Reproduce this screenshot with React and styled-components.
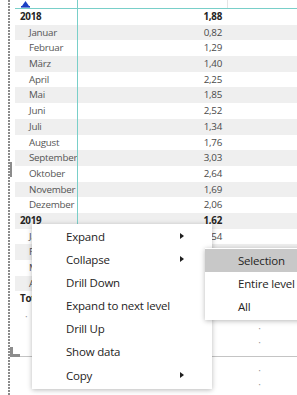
import React from "react";
import styled, { createGlobalStyle } from "styled-components";

const GlobalStyle = createGlobalStyle`
  html, body {
    margin: 0;
    padding: 0;
    background: #ffffff;
    overflow: hidden;
  }
  body {
    font-family: "Open Sans", "Noto Sans", sans-serif;
  }
`;

const TEAL = "#79cfc9";
const ROW_H = 15.7;

const Page = styled.div`
  position: relative;
  display: flex;
  width: 297px;
  height: 395px;
  overflow: hidden;
`;

const FocusRail = styled.div`
  width: 2px;
  margin-left: 8px;
  margin-right: 2px;
  background: repeating-linear-gradient(
    to bottom,
    #8a8a8a 0 2px,
    transparent 2px 3px
  );
`;

// resize handles of the focused visual
const EdgeHandle = styled.div`
  position: absolute;
  left: 10px;
  top: 162px;
  width: 2px;
  height: 15px;
  background: #8c8c8c;
`;

const CornerHandle = styled.div`
  position: absolute;
  left: 10px;
  top: 347px;
  width: 10px;
  height: 10px;
  &::before,
  &::after {
    content: "";
    position: absolute;
    background: #8c8c8c;
  }
  &::before {
    left: 0;
    top: 0;
    width: 3px;
    height: 10px;
  }
  &::after {
    left: 0;
    bottom: 0;
    width: 10px;
    height: 3px;
  }
`;

const Visual = styled.div`
  flex: 1;
  display: flex;
  flex-direction: column;
`;

const TableArea = styled.div`
  height: 356px;
  border-bottom: 1px solid #c4c4c4;
  padding-left: 3px;
  display: flex;
  flex-direction: column;
`;

const Grid = styled.div`
  display: grid;
  grid-template-columns: 63px 150px 1fr;
`;

const HeaderRow = styled(Grid)`
  height: 8px;
  border-bottom: 1px solid ${TEAL};
`;

const HeadCell = styled.div`
  position: relative;
  overflow: hidden;
  border-right: 1px solid ${(p) => (p.$teal ? TEAL : "#e4e4e4")};
  ${(p) => p.$last && "border-right: none;"}
`;

const DrillIcon = styled.svg`
  position: absolute;
  left: 6px;
  bottom: 0;
`;

const Row = styled(Grid)`
  height: ${ROW_H}px;
  background: ${(p) => (p.$shade ? "#efefef" : "#ffffff")};
  font-size: 9.8px;
  letter-spacing: -0.25px;
  line-height: ${ROW_H}px;
`;

const LabelCell = styled.div`
  border-right: 1px solid ${TEAL};
  padding-left: ${(p) => (p.$level === 0 ? 5 : 14)}px;
  color: ${(p) => (p.$level === 0 ? "#252423" : "#555555")};
  font-weight: ${(p) => (p.$level === 0 ? 700 : 400)};
  white-space: nowrap;
  overflow: hidden;
`;

const ValueCell = styled.div`
  text-align: right;
  padding-right: 6px;
  color: ${(p) => (p.$bold ? "#252423" : "#4a4a4a")};
  font-weight: ${(p) => (p.$bold ? 700 : 400)};
`;

const TailRow = styled(Grid)`
  flex: 1;
  font-size: 10px;
  color: #9a9a9a;
`;

const TailLeft = styled.div`
  padding-left: 10px;
  padding-top: 2px;
  line-height: 14px;
`;

const DotStack = styled.div`
  display: flex;
  flex-direction: column;
  align-items: center;
  padding-top: ${(p) => p.$top}px;
  padding-right: 6px;
  line-height: 14px;
  font-size: 10px;
  color: #9a9a9a;
`;

const BelowArea = styled(Grid)`
  padding-left: 3px;
  flex: 1;
`;

const Menu = styled.div`
  position: absolute;
  left: ${(p) => p.$left}px;
  top: ${(p) => p.$top}px;
  width: ${(p) => p.$width}px;
  padding: 1px 0 2px;
  background: #ffffff;
  box-shadow: 0 1px 5px rgba(0, 0, 0, 0.28);
  font-size: 11.5px;
  letter-spacing: -0.2px;
  color: #252423;
`;

const MenuItem = styled.div`
  position: relative;
  height: 23.1px;
  line-height: 23px;
  padding-left: ${(p) => p.$pad}px;
  white-space: nowrap;
  background: ${(p) => (p.$active ? "#c8c8c8" : "transparent")};
`;

const SubArrow = styled.span`
  position: absolute;
  left: 148px;
  top: 8px;
  width: 0;
  height: 0;
  border-left: 4px solid #1f1f1f;
  border-top: 3.5px solid transparent;
  border-bottom: 3.5px solid transparent;
`;

const rows = [
  { label: "2018", value: "1,88", level: 0 },
  { label: "Januar", value: "0,82", level: 1 },
  { label: "Februar", value: "1,29", level: 1 },
  { label: "März", value: "1,40", level: 1 },
  { label: "April", value: "2,25", level: 1 },
  { label: "Mai", value: "1,85", level: 1 },
  { label: "Juni", value: "2,52", level: 1 },
  { label: "Juli", value: "1,34", level: 1 },
  { label: "August", value: "1,76", level: 1 },
  { label: "September", value: "3,03", level: 1 },
  { label: "Oktober", value: "2,64", level: 1 },
  { label: "November", value: "1,69", level: 1 },
  { label: "Dezember", value: "2,06", level: 1 },
  { label: "2019", value: "1,62", level: 0 },
  { label: "Januar", value: "1,54", level: 1 },
  { label: "Februar", value: "", level: 1 },
  { label: "März", value: "", level: 1 },
  { label: "April", value: "", level: 1 },
  { label: "Total", value: "", level: 0 },
];

const menuItems = [
  { label: "Expand", sub: true },
  { label: "Collapse", sub: true },
  { label: "Drill Down" },
  { label: "Expand to next level" },
  { label: "Drill Up" },
  { label: "Show data" },
  { label: "Copy", sub: true },
];

const subItems = ["Selection", "Entire level", "All"];

const App = () => {
  return (
    <>
      <GlobalStyle />
      <Page>
        <FocusRail />
        <Visual>
          <TableArea>
            <HeaderRow>
              <HeadCell $teal>
                <DrillIcon width="9" height="7" viewBox="0 0 9 7">
                  <path d="M4.5 0 L8 5 L1 5 Z" fill="#1a3fc4" />
                  <rect x="0" y="5" width="9" height="1.6" fill="#1a3fc4" />
                </DrillIcon>
              </HeadCell>
              <HeadCell />
              <HeadCell $last />
            </HeaderRow>
            {rows.map((r, i) => (
              <Row key={i} $shade={i % 2 === 1}>
                <LabelCell $level={r.level}>{r.label}</LabelCell>
                <ValueCell $bold={r.level === 0}>{r.value}</ValueCell>
                <div />
              </Row>
            ))}
            <TailRow>
              <TailLeft>·</TailLeft>
              <div />
              <DotStack $top={14}>
                <span>·</span>
                <span>·</span>
              </DotStack>
            </TailRow>
          </TableArea>
          <BelowArea>
            <div />
            <div />
            <DotStack $top={6}>
              <span>·</span>
              <span>·</span>
            </DotStack>
          </BelowArea>
        </Visual>
        <EdgeHandle />
        <CornerHandle />

        <Menu $left={32} $top={224} $width={180}>
          {menuItems.map((m) => (
            <MenuItem key={m.label} $pad={34}>
              {m.label}
              {m.sub && <SubArrow />}
            </MenuItem>
          ))}
        </Menu>

        <Menu $left={205} $top={248} $width={112}>
          {subItems.map((s, i) => (
            <MenuItem key={s} $pad={33} $active={i === 0}>
              {s}
            </MenuItem>
          ))}
        </Menu>
      </Page>
    </>
  );
};

export default App;
